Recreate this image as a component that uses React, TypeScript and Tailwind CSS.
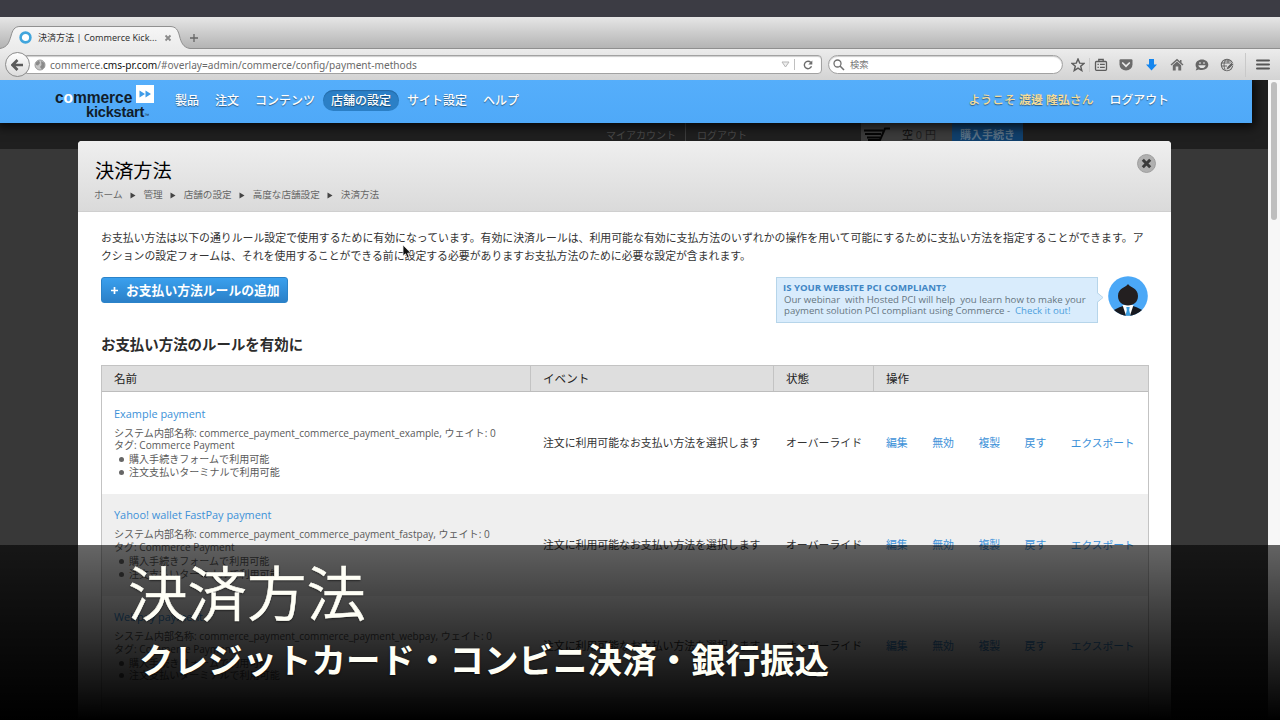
import type { ReactNode } from 'react'

interface PaymentRule {
  title: string
  machineName: string
  shaded: boolean
}

const rules: PaymentRule[] = [
  { title: 'Example payment', machineName: 'commerce_payment_commerce_payment_example', shaded: false },
  { title: 'Yahoo! wallet FastPay payment', machineName: 'commerce_payment_commerce_payment_fastpay', shaded: true },
  { title: 'Webpay payment', machineName: 'commerce_payment_commerce_payment_webpay', shaded: false },
]

const breadcrumbs = ['ホーム', '管理', '店舗の設定', '高度な店舗設定', '決済方法']
const operations = ['編集', '無効', '複製', '戻す']

function TabBar() {
  return (
    <div className="flex h-8 items-end border-b border-[#8f8f8f] bg-linear-to-b from-[#e6e6e6] to-[#b4b4b4]">
      <div className="relative -mb-px h-[23px] w-[190px] shrink-0">
        <svg className="absolute inset-0" width="190" height="23" viewBox="0 0 190 23">
          <defs>
            <linearGradient id="tab" x1="0" y1="0" x2="0" y2="1">
              <stop offset="0" stopColor="#f6f6f6" />
              <stop offset="1" stopColor="#ebebeb" />
            </linearGradient>
          </defs>
          <path
            d="M0 22.5C8 21 9 16 11 10C12.500 4 14.500 0.500 20 0.500H170C176 0.500 178 4 179.500 10C181 16 183 21.500 190 22.500V23H0Z"
            fill="url(#tab)"
          />
          <path
            d="M0 22.500C8 21 9 16 11 10C12.500 4 14.500 0.500 20 0.500H170C176 0.500 178 4 179.500 10C181 16 183 21.500 190 22.500"
            fill="none"
            stroke="#909090"
          />
        </svg>
        <div className="relative flex h-full items-center pl-[19px]">
          <svg width="13" height="13" viewBox="0 0 13 13">
            <circle cx="6.500" cy="6.500" r="4.900" fill="#fff" stroke="#41a5dc" strokeWidth="2.600" />
          </svg>
          <span className="ml-1.5 w-[124px] text-[9.05px] whitespace-nowrap text-[#333] [font-family:'Noto_Sans','Noto_Sans_CJK_JP',sans-serif]">
            決済方法 | Commerce Kick...
          </span>
          <svg className="ml-0.5" width="8" height="8" viewBox="0 0 8 8">
            <path d="M1.500 1.500L6.500 6.500M6.500 1.500L1.500 6.500" stroke="#8a8a8a" strokeWidth="1.800" />
          </svg>
        </div>
      </div>
      <svg className="mb-[5px] -ml-px" width="10" height="10" viewBox="0 0 10 10">
        <path d="M5 1V9M1 5H9" stroke="#666" strokeWidth="1.300" />
      </svg>
    </div>
  )
}

function Toolbar() {
  return (
    <div className="flex h-[31px] items-center bg-linear-to-b from-[#ececec] to-[#d3d3d3] text-[#5c5c5c] [font-family:'Noto_Sans','Noto_Sans_CJK_JP',sans-serif]">
      <div className="z-10 ml-[5px] flex size-[25px] shrink-0 items-center justify-center rounded-full border border-[#8c8c8c] bg-linear-to-b from-white to-[#dcdcdc]">
        <svg width="13" height="12" viewBox="0 0 13 12">
          <path d="M6.500 1L1.500 6L6.500 11M2 6H12" fill="none" stroke="#5a5a5a" strokeWidth="2.700" />
        </svg>
      </div>
      <div className="-ml-1 flex h-[19px] w-[796px] shrink-0 items-center rounded-r-sm border border-[#a2a2a2] bg-white shadow-[inset_0_1px_1px_#ccc]">
        <svg className="ml-[7px]" width="12" height="12" viewBox="0 0 12 12">
          <circle cx="6" cy="6" r="5" fill="#c6c6c6" stroke="#9b9b9b" />
          <path d="M2 3.500L5 1.500L6 4L4 6.500L2 6ZM7 2L10.500 4V8L8 10.500L6 8L7.500 6Z" fill="#8a8a8a" />
        </svg>
        <span className="ml-1 flex-1 pt-0.5 text-[10.15px] whitespace-nowrap text-[#6a6a6a]">
          commerce.<span className="text-[#111]">cms-pr.com</span>/#overlay=admin/commerce/config/payment-methods
        </span>
        <svg width="9" height="7" viewBox="0 0 9 7">
          <path d="M1 1H8L4.500 6Z" fill="#eee" stroke="#b5b5b5" />
        </svg>
        <span className="ml-1 h-[11px] w-px bg-[#c0c0c0]" />
        <svg className="mx-2" width="10" height="10" viewBox="0 0 10 10">
          <path d="M7.800 2.500A3.700 3.700 0 1 0 8.500 6.300" fill="none" stroke="#6c6c6c" strokeWidth="1.400" />
          <path d="M9.300 0.500V4.500H5.300Z" fill="#6c6c6c" />
        </svg>
      </div>
      <div className="ml-1.5 flex h-[19px] w-[235px] shrink-0 items-center rounded-full border border-[#a2a2a2] bg-white shadow-[inset_0_1px_1px_#ccc]">
        <svg className="ml-1" width="12" height="12" viewBox="0 0 12 12">
          <circle cx="4.500" cy="4.500" r="3.500" fill="none" stroke="#707070" strokeWidth="1.300" />
          <path d="M7 7L11 11" stroke="#707070" strokeWidth="1.600" />
        </svg>
        <span className="ml-[5px] text-[9.3px] text-[#777]">検索</span>
      </div>
      <div className="ml-2 flex items-center">
        <svg width="14" height="14" viewBox="0 0 14 14">
          <path
            d="M7 1L8.700 5.100L13 5.400L9.700 8.200L10.800 12.600L7 10.200L3.200 12.600L4.300 8.200L1 5.400L5.300 5.100Z"
            fill="none"
            stroke="#5c5c5c"
            strokeWidth="1.400"
          />
        </svg>
        <span className="ml-1 h-3.5 w-px bg-[#cbcbcb]" />
        <svg className="ml-1" width="14" height="14" viewBox="0 0 14 14">
          <rect x="1.500" y="3.500" width="11" height="8.800" rx="1" fill="none" stroke="#5c5c5c" strokeWidth="1.300" />
          <path d="M4.800 3.500V1.500H9.200V3.500" fill="none" stroke="#5c5c5c" strokeWidth="1.300" />
          <path d="M3.500 6.300H4.800M6 6.300H10.800M3.500 9.300H4.800M6 9.300H10.800" stroke="#5c5c5c" strokeWidth="1.300" />
        </svg>
        <svg className="ml-[11px]" width="14" height="14" viewBox="0 0 14 14">
          <path d="M0.500 2.500Q0.500 1.300 1.700 1.300H12.300Q13.500 1.300 13.500 2.500V6.500A6.500 6 0 0 1 0.500 6.500Z" fill="#6b6b6b" />
          <path d="M3.700 5L7 8.200L10.300 5" fill="none" stroke="#e8e8e8" strokeWidth="1.700" strokeLinecap="round" />
        </svg>
        <svg className="ml-3" width="13" height="14" viewBox="0 0 13 14">
          <path d="M4 1H9V6.500H12L6.500 12.500L1 6.500H4Z" fill="#1586ee" />
        </svg>
        <svg className="ml-3" width="14" height="14" viewBox="0 0 14 14">
          <path d="M1 7L7 1.700L13 7" fill="none" stroke="#6b6b6b" strokeWidth="1.500" />
          <path d="M10 2H11.500V5L10 4ZM2.800 7.300L7 3.600L11.200 7.300V12.500H8.300V8.500H5.700V12.500H2.800Z" fill="#6b6b6b" />
        </svg>
        <svg className="ml-[11px]" width="14" height="14" viewBox="0 0 14 14">
          <path d="M7 1.500C10.600 1.500 13.300 3.800 13.300 6.800C13.300 9.800 10.600 12 7 12C5.800 12 4.700 11.800 3.700 11.400L0.700 12.500L1.700 10C0.900 9.100 0.600 8 0.600 6.800C0.600 3.800 3.400 1.500 7 1.500Z" fill="#666" />
          <path d="M4.300 4.300H5.700V5.700H4.300ZM8.300 4.300H9.700V5.700H8.300ZM3.300 7.200H10.700Q10 10 7 10Q4 10 3.300 7.200Z" fill="#e3e3e3" />
        </svg>
        <svg className="ml-[11px]" width="14" height="14" viewBox="0 0 14 14">
          <circle cx="7" cy="7" r="5.700" fill="none" stroke="#666" strokeWidth="1.100" />
          <path d="M1.500 5H12M2 8H7M6 1.500C3.500 4 3.500 9 5.500 12.500M8 1.500V5M10.500 3L4.500 3" fill="none" stroke="#666" />
          <path d="M6 12L7 9L11.500 4.500L13.500 6.500L9 11Z" fill="#666" stroke="#ddd" strokeWidth="0.700" />
        </svg>
        <span className="ml-[11px] h-6 w-px bg-[#c9c9c9]" />
        <svg className="ml-2.5" width="14" height="12" viewBox="0 0 14 12">
          <path d="M1 1.500H13M1 5.500H13M1 9.500H13" stroke="#555" strokeWidth="2" strokeLinecap="round" />
        </svg>
      </div>
    </div>
  )
}

function Logo() {
  return (
    <div className="flex h-[34px] w-[99px] flex-col [font-family:'Liberation_Sans',sans-serif]">
      <div className="flex h-[18px] items-start justify-between">
        <span className="pt-[7px] text-[15.6px] leading-3 font-bold tracking-[-0.1px] text-[#111d2a]">
          c<span className="text-white">o</span>mmerce
        </span>
        <svg width="18" height="18" viewBox="0 0 18 18">
          <rect width="18" height="18" fill="#fff" />
          <path d="M3.500 5.500L9 9L3.500 12.500ZM9.500 5.500L15 9L9.500 12.500Z" fill="#3f9ce8" />
        </svg>
      </div>
      <div className="flex items-baseline pt-px pl-[31px] leading-4 text-[#111d2a]">
        <span className="text-[14.6px] font-bold tracking-[-0.2px]">kickstart</span>
        <span className="text-[5px]">™</span>
      </div>
    </div>
  )
}

function NavItem({ children, active }: { children: ReactNode; active?: boolean }) {
  if (active) {
    return (
      <span className="h-[21px] rounded-full bg-[#2b7fc6] px-2 leading-[22px] shadow-[inset_0_1px_1px_#2468a3]">{children}</span>
    )
  }
  return <span className="px-2 leading-[22px]">{children}</span>
}

function AdminBar() {
  return (
    <div className="relative z-10 flex h-[43px] w-[1252px] items-start bg-linear-to-b from-[#55aefb] to-[#4fa9f8] shadow-[0_1px_10px_3px_rgba(0,0,0,0.75)]">
      <div className="ml-[55px] pt-[5px]">
        <Logo />
      </div>
      <div className="ml-[13px] flex pt-2.5 text-[12px] font-medium text-white [text-shadow:0_1px_1px_rgba(0,0,0,0.45)]">
        <NavItem>製品</NavItem>
        <NavItem>注文</NavItem>
        <NavItem>コンテンツ</NavItem>
        <NavItem active>店舗の設定</NavItem>
        <NavItem>サイト設定</NavItem>
        <NavItem>ヘルプ</NavItem>
      </div>
      <div className="mr-[83px] ml-auto flex gap-4 pt-[9px] text-[11.9px] leading-5 text-white [text-shadow:0_1px_1px_rgba(0,0,0,0.45)]">
        <span className="font-medium text-[#f5dc97]">
          ようこそ <b>渡邊 隆弘</b>さん
        </span>
        <span className="font-medium">ログアウト</span>
      </div>
    </div>
  )
}

// Shop header that stays visible, dimmed, behind the overlay
function DimmedShopHeader() {
  return (
    <div className="absolute inset-x-0 top-0 flex h-[69px] items-start bg-[#1f1f1f] pt-[43px] text-[10px] leading-6 text-[#4a4a4a]">
      <span className="ml-[606px] w-[79px]">マイアカウント</span>
      <span className="h-5 w-px bg-[#3c3c3c]" />
      <span className="ml-[11px] w-[164px]">ログアウト</span>
      <div className="flex h-5 w-[91px] items-start bg-[#3b3b3b] text-[11px]">
        <svg className="mt-1 ml-0.5" width="28" height="14" viewBox="0 0 28 14">
          <path d="M27 1.500H22L17 13H5M1 3.500H20M2 7H18M4 10.500H17" fill="none" stroke="#050505" strokeWidth="2" />
        </svg>
        <span className="ml-[11px] text-[#0c0c0c]">
          空 <span className="text-[#1b1b1b]">0 円</span>
        </span>
      </div>
      <div className="flex h-5 w-[71px] justify-center bg-[#103f6b] text-[11px] font-bold text-[#587084]">購入手続き</div>
    </div>
  )
}

function OverlayHeader() {
  return (
    <div className="flex h-[71px] justify-between rounded-t-sm border-b border-[#cfcfcf] bg-linear-to-b from-[#efefef] to-[#dadada] pr-[15px] pl-4">
      <div>
        <h1 className="mt-4 ml-px text-[19.2px] leading-7 text-black">決済方法</h1>
        <div className="mt-0.5 flex items-center text-[9.6px] leading-4 text-[#666]">
          {breadcrumbs.map((crumb, i) => (
            <span key={crumb} className="flex items-center">
              {i > 0 && (
                <svg className="mr-2 ml-[7px]" width="6" height="7" viewBox="0 0 6 7">
                  <path d="M0.500 0.500L5.500 3.500L0.500 6.500Z" fill="#444" />
                </svg>
              )}
              {crumb}
            </span>
          ))}
        </div>
      </div>
      <svg className="mt-[13px]" width="19" height="19" viewBox="0 0 19 19">
        <circle cx="9.500" cy="9.500" r="9" fill="#b0b0b0" stroke="#949494" strokeWidth="0.800" />
        <path d="M5.800 5.800L13.200 13.200M13.200 5.800L5.800 13.200" stroke="#3b3b3b" strokeWidth="3" />
      </svg>
    </div>
  )
}

function PciNotice() {
  return (
    <div className="flex">
      <div className="relative h-[46px] w-[322px] border border-[#b6d5ea] bg-[#d9ecfc] pt-1 pl-[7px] text-[9.62px] leading-[11.5px] text-[#66757f]">
        <div className="-ml-px text-[9.58px] font-bold text-[#4186c4]">IS YOUR WEBSITE PCI COMPLIANT?</div>
        <div className="whitespace-pre">Our webinar  with Hosted PCI will help  you learn how to make your</div>
        <div className="whitespace-pre">
          payment solution PCI compliant using Commerce -  <span className="text-[#4c9fdc]">Check it out!</span>
        </div>
        <svg className="absolute top-[14px] -right-[7px]" width="7" height="11" viewBox="0 0 7 11">
          <path d="M0 0.500L6 5.500L0 10.500" fill="#d9ecfc" stroke="#b6d5ea" />
        </svg>
      </div>
      <svg className="-mt-px ml-2.5" width="40" height="41" viewBox="0 0 40 41">
        <clipPath id="face">
          <circle cx="20" cy="20" r="19.800" />
        </clipPath>
        <g clipPath="url(#face)">
          <rect width="40" height="41" fill="#4ba8f7" />
          <path d="M4 36C6 33 10 32 15 30H25C30 32 34 33 36 36V41H4Z" fill="#17191f" />
          <path d="M14.500 29L18.500 41H21.500L25.500 29Z" fill="#fff" />
          <path d="M18.300 31H21.700L21.200 34L22.700 41H17.300L18.800 34Z" fill="#3a9de0" />
          <path d="M20 8C22 11.500 30 12 30 20C30 26 25.500 29.500 20 29.500C14.500 29.500 10 26 10 20C10 12 18 11.500 20 8Z" fill="#231f20" />
        </g>
      </svg>
    </div>
  )
}

function RuleRow({ title, machineName, shaded }: PaymentRule) {
  return (
    <div className={`flex h-[101.7px] items-center text-[10.88px] text-[#333] ${shaded ? 'bg-[#efefef]' : 'bg-white'}`}>
      <div className="h-full w-[428px] pt-[13.6px] pl-3">
        <div className="text-[10.93px] leading-4 text-[#3c91d8]">{title}</div>
        <div className="mt-[5px] text-[10.05px] leading-[12.600px] text-[#5a5a5a]">
          <div className="whitespace-nowrap">システム内部名称: {machineName}, ウェイト: 0</div>
          <div>タグ: Commerce Payment</div>
          <ul className="mt-[1.500px] list-none">
            {['購入手続きフォームで利用可能', '注文支払いターミナルで利用可能'].map((item) => (
              <li key={item} className="flex items-center pl-[5px]">
                <span className="mr-[5px] size-[5px] rounded-full bg-[#666]" />
                {item}
              </li>
            ))}
          </ul>
        </div>
      </div>
      <div className="w-[243px] pl-[13px]">注文に利用可能なお支払い方法を選択します</div>
      <div className="w-[100px] pl-[13px]">オーバーライド</div>
      <div className="flex pl-[13px] text-[#3c91d8]">
        {operations.map((op) => (
          <span key={op} className="w-[46.200px]">
            {op}
          </span>
        ))}
        <span className="text-[10.7px]">エクスポート</span>
      </div>
    </div>
  )
}

function RulesTable() {
  return (
    <div className="w-[1048px] border border-[#c3c3c3]">
      <div className="flex h-[26px] items-center border-b border-[#bdbdbd] bg-[#dedede] text-[11.6px] leading-[25px] text-[#222]">
        <div className="w-[428px] pl-3">名前</div>
        <div className="w-[243px] border-l border-[#c3c3c3] pl-3">イベント</div>
        <div className="w-[100px] border-l border-[#c3c3c3] pl-3">状態</div>
        <div className="flex-1 border-l border-[#c3c3c3] pl-3">操作</div>
      </div>
      {rules.map((rule) => (
        <RuleRow key={rule.title} {...rule} />
      ))}
      <div className="h-[60px] bg-[#efefef]" />
    </div>
  )
}

function Overlay() {
  return (
    <div className="relative z-20 mt-[18px] ml-[78px] w-[1093px] rounded-t-sm bg-white">
      <OverlayHeader />
      <div className="pt-[17px] pl-[23px]">
        <p className="text-[10.9px] leading-[17.600px] whitespace-nowrap text-[#333]">
          お支払い方法は以下の通りルール設定で使用するために有効になっています。有効に決済ルールは、利用可能な有効に支払方法のいずれかの操作を用いて可能にするために支払い方法を指定することができます。ア
          <br />
          <span className="text-[10.86px]">
            クションの設定フォームは、それを使用することができる前に設定する必要がありますお支払方法のために必要な設定が含まれます。
          </span>
        </p>
        <div className="mt-[13px] flex h-[46px] items-start justify-between pr-[23px]">
          <button className="flex h-[26px] w-[187px] items-center rounded-[3px] border border-[#2b83c9] bg-linear-to-b from-[#3aa0ee] to-[#2b80c8] pl-2 text-[12.8px] font-bold whitespace-nowrap text-white">
            <svg className="mr-[7px]" width="9" height="9" viewBox="0 0 9 9">
              <path d="M4.500 1V8M1 4.500H8" stroke="#fff" strokeWidth="1.700" />
            </svg>
            お支払い方法ルールの追加
          </button>
          <PciNotice />
        </div>
        <h2 className="mt-3 mb-[10px] text-[14.45px] leading-5 font-bold text-[#2c2c2c]">お支払い方法のルールを有効に</h2>
        <RulesTable />
      </div>
    </div>
  )
}

function Caption() {
  return (
    <div className="absolute inset-x-0 bottom-0 z-30 h-[175px] bg-linear-to-b from-black/60 to-black text-[#fffff6] [text-shadow:0_1px_2px_rgba(0,0,0,0.6)]">
      <div className="pt-1.5 pl-[128px] text-[59.5px] leading-[84px] font-[350] [-webkit-text-stroke:0.5px_#fffff6]">決済方法</div>
      <div className="pl-[139px] text-[34.5px] leading-[50px] font-bold whitespace-nowrap">
        クレジットカード・コンビニ決済・銀行振込
      </div>
    </div>
  )
}

export default function App() {
  return (
    <div className="relative flex h-[720px] w-[1280px] flex-col overflow-hidden bg-[#3c3c44] pt-[17px] [font-family:'Open_Sans','Noto_Sans_CJK_JP',sans-serif]">
      <TabBar />
      <Toolbar />
      <div className="flex h-[640px]">
        <div className="relative w-[1268px] overflow-hidden bg-[#383838]">
          <DimmedShopHeader />
          <AdminBar />
          <Overlay />
        </div>
        <div className="flex w-3 justify-center bg-[#f7f7f7] pt-0.5">
          <div className="h-[138px] w-1.5 rounded-full bg-[#bebebe]" />
        </div>
      </div>
      <svg className="absolute top-[244px] left-[402px] z-20" width="10" height="15" viewBox="0 0 10 15">
        <path d="M1 1V12L3.500 9.800L5.200 13.800L7.200 13L5.600 9.200H9Z" fill="#111" stroke="#eee" strokeWidth="0.800" />
      </svg>
      <Caption />
    </div>
  )
}
